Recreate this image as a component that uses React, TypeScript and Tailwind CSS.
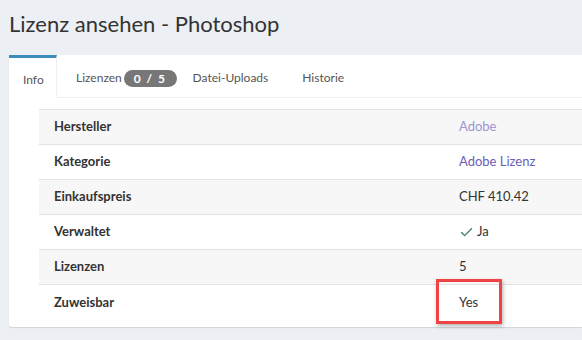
import { Check } from "lucide-react";

const rows: { label: string; value: React.ReactNode }[] = [
  { label: "Hersteller", value: <span className="text-[#a093d0]">Adobe</span> },
  { label: "Kategorie", value: <span className="text-[#6a5fb8]">Adobe Lizenz</span> },
  { label: "Einkaufspreis", value: "CHF 410.42" },
  {
    label: "Verwaltet",
    value: (
      <span className="flex items-center gap-[3px]">
        <Check size={15} strokeWidth={2} className="text-[#3d7a6a]" />
        Ja
      </span>
    ),
  },
  { label: "Lizenzen", value: "5" },
  { label: "Zuweisbar", value: "Yes" },
];

export default function App() {
  return (
    <div
      className="w-[582px] h-[340px] overflow-hidden bg-[#eceff4] text-[#333]"
      style={{ fontFamily: "Lato, sans-serif" }}
    >
      <h1 className="pl-[9px] pt-[9px] h-[55px] text-[22px] text-[#333] font-normal leading-[30px]">
        Lizenz ansehen - Photoshop
      </h1>
      <div className="ml-[9px] bg-white h-[272px] rounded-bl-[2px] shadow-[0_1px_1px_rgba(0,0,0,0.12)] relative">
        {/* Tabs */}
        <div className="flex h-[43px] text-[12px] text-[#555]">
          <div className="w-[48px] border-t-[3px] border-[#3c8dbc] border-r border-r-[#f0f0f0] flex items-center pl-[14px] pt-[4px] text-[#555]">
            Info
          </div>
          <div className="flex-1 flex items-center pt-[4px] border-b border-[#f0f0f0]">
            <div className="pl-[19px] flex items-center">
              Lizenzen
              <span className="ml-[2px] bg-[#777] text-white text-[12px] font-bold rounded-full px-[10px] h-[17px] leading-[17px] tracking-[1.5px]">
                0 / 5
              </span>
            </div>
            <div className="pl-[16px] pr-[17px]">Datei-Uploads</div>
            <div className="px-[17px]">Historie</div>
          </div>
        </div>

        {/* Table */}
        <div className="ml-[30px] mt-[11px] border-t border-[#e2e2e2] text-[13px]">
          {rows.map((r, i) => (
            <div
              key={r.label}
              className={`flex h-[35px] items-center ${i < rows.length - 1 ? "border-b border-[#e2e2e2]" : ""} ${i % 2 === 0 ? "bg-[#f7f7f7]" : "bg-white"}`}
            >
              <div className="w-[420px] pl-[15px] font-bold text-[#333]">{r.label}</div>
              <div className="text-[#333]">{r.value}</div>
            </div>
          ))}
        </div>

        {/* red highlight annotation */}
        <div className="absolute left-[427px] top-[224px] w-[66px] h-[45px] border-[3px] border-[#f04444] shadow-[1px_2px_4px_rgba(0,0,0,0.3)]" />
      </div>
    </div>
  );
}
